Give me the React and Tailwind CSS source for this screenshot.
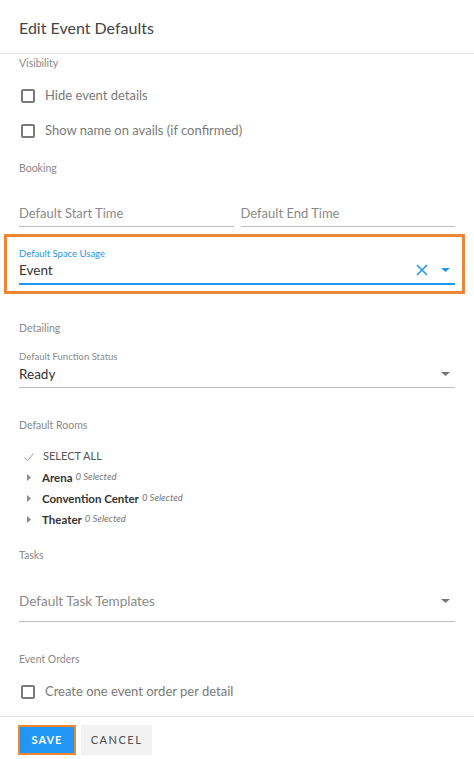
import React from 'react';

const font = { fontFamily: 'Lato, "Open Sans", sans-serif' };

const Caret = ({ className = 'text-[#757575]' }) => (
  <svg className={className} width="9" height="4" viewBox="0 0 9 4">
    <path d="M0 0h9L4.5 4z" fill="currentColor" />
  </svg>
);

const Checkbox = ({ label, className = '' }) => (
  <label className={`flex h-[24px] items-center ${className}`}>
    <span className="ml-[2px] h-[14px] w-[14px] rounded-[2px] border-2 border-[#7a7a7a]" />
    <span className="ml-[10px] text-[13px] text-[#7a7a7a]">{label}</span>
  </label>
);

const SectionLabel = ({ children, className = '' }) => (
  <div className={`text-[10.5px] leading-[14px] text-[#8a8a8a] ${className}`}>{children}</div>
);

const Room = ({ name }) => (
  <div className="flex h-[21px] items-center">
    <svg className="ml-[8px] mr-[11px] text-[#8a8a8a]" width="4" height="7" viewBox="0 0 4 7">
      <path d="M0 0l4 3.5L0 7z" fill="currentColor" />
    </svg>
    <span className="text-[11.5px] font-bold text-[#333]">{name}</span>
    <span className="ml-[3px] text-[9.5px] italic text-[#777]">0 Selected</span>
  </div>
);

export default function App() {
  return (
    <div className="min-h-[759px] w-[474px] bg-white" style={font}>
      <div className="flex h-[54px] items-center border-b border-[#e3e3e3] px-[19px]">
        <h1 className="pt-[2px] text-[16px] text-[#444]">Edit Event Defaults</h1>
      </div>

      <div className="px-[19px]">
        <SectionLabel className="mt-[2px]">Visibility</SectionLabel>
        <Checkbox label="Hide event details" className="mt-[14px]" />
        <Checkbox label="Show name on avails (if confirmed)" className="mt-[11px]" />

        <SectionLabel className="mt-[18px]">Booking</SectionLabel>
        <div className="mt-[28px] flex gap-[7px]">
          <div className="flex-1 border-b border-[#bdbdbd] pb-[3px] text-[13px] leading-[20px] text-[#8a8a8a]">
            Default Start Time
          </div>
          <div className="flex-1 border-b border-[#bdbdbd] pb-[3px] text-[13px] leading-[20px] text-[#8a8a8a]">
            Default End Time
          </div>
        </div>

        <div className="-ml-[15px] -mr-[10px] mt-[7px] border-[3px] border-[#ef8632] pb-[6px] pl-[12px] pr-[7px] pt-[11px]">
          <div className="text-[9.5px] leading-[12px] text-[#2196f3]">Default Space Usage</div>
          <div className="mt-[1px] flex items-center border-b-2 border-[#2196f3] pb-[4px]">
            <span className="flex-1 text-[13.5px] leading-[18px] text-[#333]">Event</span>
            <svg width="12" height="12" viewBox="0 0 12 12" className="mr-[13px] text-[#2196f3]">
              <path d="M1 1l10 10M11 1L1 11" stroke="currentColor" strokeWidth="1.6" />
            </svg>
            <Caret className="mr-[5px] text-[#2196f3]" />
          </div>
        </div>

        <SectionLabel className="mt-[27px]">Detailing</SectionLabel>
        <div className="mt-[16px] text-[9.5px] leading-[12px] text-[#8a8a8a]">Default Function Status</div>
        <div className="mt-[2px] flex items-center border-b border-[#bdbdbd] pb-[4px]">
          <span className="flex-1 text-[13.5px] leading-[18px] text-[#333]">Ready</span>
          <Caret className="mr-[5px] text-[#757575]" />
        </div>

        <SectionLabel className="mt-[30px]">Default Rooms</SectionLabel>
        <div className="mt-[14px]">
          <div className="flex h-[21px] items-center">
            <svg className="ml-[5px] mr-[9px] text-[#a0a0a0]" width="10" height="8" viewBox="0 0 10 8">
              <path d="M0.5 4.5l3 3L9.5 0.5" stroke="currentColor" strokeWidth="1" fill="none" />
            </svg>
            <span className="text-[11px] text-[#555]">SELECT ALL</span>
          </div>
          <Room name="Arena" />
          <Room name="Convention Center" />
          <Room name="Theater" />
        </div>

        <SectionLabel className="mt-[18px]">Tasks</SectionLabel>
        <div className="mt-[29px] flex items-center border-b border-[#bdbdbd] pb-[10px]">
          <span className="flex-1 text-[13.5px] leading-[20px] text-[#8a8a8a]">Default Task Templates</span>
          <Caret className="mr-[5px] text-[#757575]" />
        </div>

        <SectionLabel className="mt-[30px]">Event Orders</SectionLabel>
        <Checkbox label="Create one event order per detail" className="mt-[14px]" />
      </div>

      <div className="mt-[12px] flex gap-[5px] border-t border-[#e3e3e3] px-[18px] pt-[8px]">
        <button className="h-[30px] w-[58px] border-2 border-[#ef8632] bg-[#2196f3] text-[11px] font-bold tracking-[1px] text-white">
          SAVE
        </button>
        <button className="h-[30px] w-[71px] bg-[#f2f2f2] text-[11px] font-medium tracking-[1.5px] text-[#555]">
          CANCEL
        </button>
      </div>
    </div>
  );
}
